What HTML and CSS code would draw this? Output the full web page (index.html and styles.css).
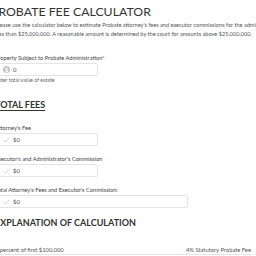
FILE: index.html
```html
<!DOCTYPE html>
<html lang="en">

<head>
    <meta charset="UTF-8">
    <meta name="viewport" content="width=device-width, initial-scale=1.0">
    <title>Probate Fee Calculator</title>
    <link rel="stylesheet" href="styles.css">
</head>

<body>
    <div class="calculator">
        <h1>Probate Fee Calculator</h1>
        <p class="intro">Please use the calculator below to estimate Probate attorney's fees and executor commissions for the administration of estates less than $25,000,000. A reasonable amount is determined by the court for amounts above $25,000,000.</p>

        <div class="field first">
            <label for="estateValue">Property Subject to Probate Administration<span class="req">*</span></label>
            <div class="input-box">
                <span class="icon dollar">$</span>
                <input type="text" id="estateValue" value="0">
            </div>
            <div class="help">Enter total value of estate</div>
        </div>

        <h2><span>Total Fees</span></h2>

        <div class="field">
            <label>Attorney's Fee</label>
            <div class="input-box">
                <svg class="icon check" viewBox="0 0 10 8"><path d="M0.8 4.2 L3.4 6.8 L9.2 1" fill="none" stroke="#b5b5b5" stroke-width="0.9"/></svg>
                <span class="value">$0</span>
            </div>
        </div>

        <div class="field">
            <label>Executor's and Administrator's Commission</label>
            <div class="input-box">
                <svg class="icon check" viewBox="0 0 10 8"><path d="M0.8 4.2 L3.4 6.8 L9.2 1" fill="none" stroke="#b5b5b5" stroke-width="0.9"/></svg>
                <span class="value">$0</span>
            </div>
        </div>

        <div class="field">
            <label>Total Attorney's Fees and Executor's Commission:</label>
            <div class="input-box wide">
                <svg class="icon check" viewBox="0 0 10 8"><path d="M0.8 4.2 L3.4 6.8 L9.2 1" fill="none" stroke="#b5b5b5" stroke-width="0.9"/></svg>
                <span class="value">$0</span>
            </div>
        </div>

        <h2 class="plain">Explanation of Calculation</h2>

        <div class="calc-row">
            <span>4 percent of first $100,000</span>
            <span>4% Statutory Probate Fee</span>
        </div>
    </div>
</body>

</html>
```

FILE: styles.css
```css
body {
    font-family: 'Lato', 'Open Sans', sans-serif;
    background-color: #fff;
    color: #555;
    margin: 0;
    overflow: hidden;
}

.calculator {
    margin-left: -5px;
    width: 318px;
    padding-top: 3px;
}

h1 {
    font-size: 12.3px;
    font-weight: 400;
    text-transform: uppercase;
    color: #333;
    margin: 0 0 0 -4px;
    line-height: 17px;
}

.intro {
    font-size: 5.6px;
    line-height: 9px;
    margin: 0;
    color: #555;
}

.field {
    margin-top: 9px;
}

.field.first {
    margin-top: 16px;
}

h2 + .field {
    margin-top: 13px;
}

label {
    display: block;
    font-size: 5.7px;
    line-height: 8px;
    color: #444;
    margin-bottom: 1px;
}

.req {
    color: #e02020;
}

.input-box {
    display: flex;
    align-items: center;
    width: 94px;
    height: 11px;
    border: 1px solid #e4e4e4;
    border-radius: 2px;
    padding-left: 7px;
}

.input-box.wide {
    width: 184px;
}

.input-box input {
    border: none;
    outline: none;
    font-family: inherit;
    font-size: 5.9px;
    color: #555;
    width: 60px;
    padding: 0;
    margin-left: 3px;
}

.icon.dollar {
    display: inline-flex;
    justify-content: center;
    align-items: center;
    width: 7px;
    height: 7px;
    border-radius: 50%;
    background-color: #c4c4c4;
    color: #fff;
    font-size: 5.5px;
    font-weight: 700;
}

.icon.check {
    width: 7px;
    height: 6px;
}

.value {
    font-size: 5.9px;
    color: #555;
    margin-left: 3px;
}

.help {
    font-size: 5.3px;
    line-height: 7px;
    color: #666;
    margin-top: 1px;
}

h2 {
    font-size: 9px;
    font-weight: 700;
    text-transform: uppercase;
    color: #333;
    margin: 15px 0 0;
    line-height: 11px;
}

h2 span {
    display: inline-block;
    border-bottom: 1px solid #333;
}

h2.plain {
    margin-top: 9px;
}

.calc-row {
    display: flex;
    justify-content: space-between;
    width: 256px;
    margin-top: 18px;
    line-height: 8px;
    border-bottom: 1px solid #e4e4e4;
    font-size: 5.8px;
    color: #555;
}
```
